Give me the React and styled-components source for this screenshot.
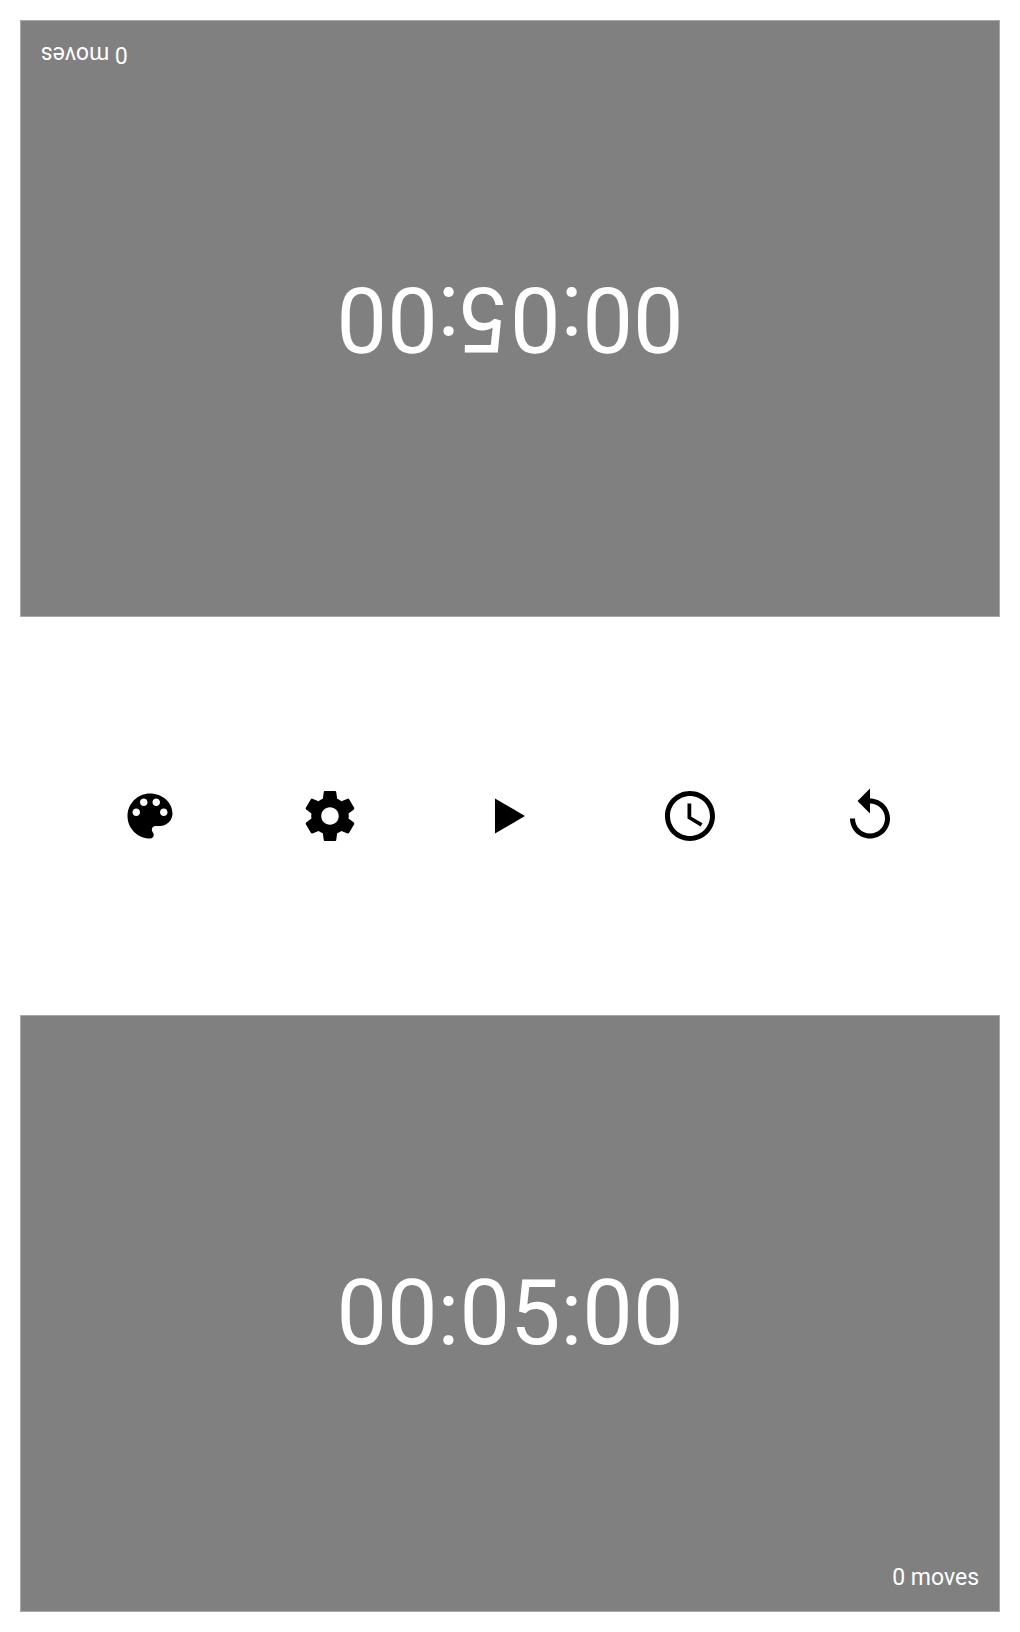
import React from 'react';
import styled, { createGlobalStyle } from 'styled-components';

const GlobalStyle = createGlobalStyle`
  html, body {
    margin: 0;
    padding: 0;
    background: #fff;
  }
`;

const Board = styled.div`
  box-sizing: border-box;
  width: 1020px;
  height: 1632px;
  padding: 20px;
  display: grid;
  grid-template-rows: 597px 1fr 597px;
  font-family: Roboto, "Liberation Sans", sans-serif;
`;

const Panel = styled.div`
  position: relative;
  box-sizing: border-box;
  display: flex;
  align-items: center;
  justify-content: center;
  background: #808080;
  border: 1px solid #a8a8a8;
  color: #fff;
  transform: ${(p) => (p.$flipped ? 'rotate(180deg)' : 'none')};
`;

const Time = styled.div`
  font-size: 90px;
  line-height: 1;
`;

const Moves = styled.div`
  position: absolute;
  right: 20px;
  bottom: 20px;
  font-size: 23px;
  line-height: 26px;
`;

const Controls = styled.div`
  display: flex;
  align-items: center;
  justify-content: space-around;
  padding: 0 40px;
`;

const IconButton = styled.button`
  display: flex;
  width: 60px;
  height: 60px;
  padding: 0;
  border: 0;
  background: none;
  color: #000;
`;

const icons = {
  palette:
    'M12 3c-4.97 0-9 4.03-9 9s4.03 9 9 9c.83 0 1.5-.67 1.5-1.5 0-.39-.15-.74-.39-1.01-.23-.26-.38-.61-.38-.99 0-.83.67-1.5 1.5-1.5H16c2.76 0 5-2.24 5-5 0-4.42-4.03-8-9-8zm-5.5 9c-.83 0-1.5-.67-1.5-1.5S5.67 9 6.5 9 8 9.67 8 10.5 7.33 12 6.5 12zm3-4C8.67 8 8 7.33 8 6.5S8.67 5 9.5 5s1.5.67 1.5 1.5S10.33 8 9.5 8zm5 0c-.83 0-1.5-.67-1.5-1.5S13.67 5 14.5 5s1.5.67 1.5 1.5S15.33 8 14.5 8zm3 4c-.83 0-1.5-.67-1.5-1.5S16.67 9 17.5 9s1.5.67 1.5 1.5-.67 1.5-1.5 1.5z',
  settings:
    'M19.43 12.98c.04-.32.07-.64.07-.98s-.03-.66-.07-.98l2.11-1.65c.19-.15.24-.42.12-.64l-2-3.46c-.12-.22-.39-.3-.61-.22l-2.49 1c-.52-.4-1.08-.73-1.69-.98l-.38-2.65C14.46 2.18 14.25 2 14 2h-4c-.25 0-.46.18-.49.42l-.38 2.65c-.61.25-1.17.59-1.69.98l-2.49-1c-.23-.09-.49 0-.61.22l-2 3.46c-.13.22-.07.49.12.64l2.11 1.65c-.04.32-.07.65-.07.98s.03.66.07.98l-2.11 1.65c-.19.15-.24.42-.12.64l2 3.46c.12.22.39.3.61.22l2.49-1c.52.4 1.08.73 1.69.98l.38 2.65c.03.24.24.42.49.42h4c.25 0 .46-.18.49-.42l.38-2.65c.61-.25 1.17-.59 1.69-.98l2.49 1c.23.09.49 0 .61-.22l2-3.46c.12-.22.07-.49-.12-.64l-2.11-1.65zM12 15.5c-1.93 0-3.5-1.57-3.5-3.5s1.57-3.5 3.5-3.5 3.5 1.57 3.5 3.5-1.57 3.5-3.5 3.5z',
  play: 'M6 5v14l12-7z',
  clock:
    'M11.99 2C6.47 2 2 6.48 2 12s4.47 10 9.99 10C17.52 22 22 17.52 22 12S17.52 2 11.99 2zM12 20c-4.42 0-8-3.58-8-8s3.58-8 8-8 8 3.58 8 8-3.58 8-8 8zm.5-13H11v6l5.25 3.15.75-1.23-4.5-2.67z',
  replay:
    'M12 5V1L7 6l5 5V7c3.31 0 6 2.69 6 6s-2.69 6-6 6-6-2.69-6-6H4c0 4.42 3.58 8 8 8s8-3.58 8-8-3.58-8-8-8z',
};

const Icon = ({ name }) => (
  <svg width="60" height="60" viewBox="0 0 24 24" fill="currentColor">
    <path d={icons[name]} />
  </svg>
);

const Player = ({ flipped }) => (
  <Panel $flipped={flipped}>
    <Time>00:05:00</Time>
    <Moves>0 moves</Moves>
  </Panel>
);

export default function App() {
  return (
    <>
      <GlobalStyle />
      <Board>
        <Player flipped />
        <Controls>
          <IconButton aria-label="Theme"><Icon name="palette" /></IconButton>
          <IconButton aria-label="Settings"><Icon name="settings" /></IconButton>
          <IconButton aria-label="Start"><Icon name="play" /></IconButton>
          <IconButton aria-label="Time"><Icon name="clock" /></IconButton>
          <IconButton aria-label="Reset"><Icon name="replay" /></IconButton>
        </Controls>
        <Player />
      </Board>
    </>
  );
}
